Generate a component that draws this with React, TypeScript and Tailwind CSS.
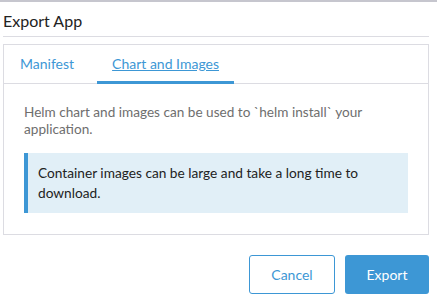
export default function App() {
  return (
    <div className="w-[437px] h-[296px] bg-white border-t-2 border-[#c6c6ce] font-['Lato',sans-serif] overflow-hidden">
      <div className="px-[3px]">
        <h2 className="h-[34px] pt-[8px] text-[16px] leading-[22px] text-[#222]">Export App</h2>
        <div className="mr-[5px] border-t border-[#dcdce2]" />
        <div className="mt-[7px] mr-[5px] h-[191px] border border-[#dcdce2]">
          <div className="flex h-[39px] border-b border-[#dcdce2]">
            <button className="ml-[1px] px-[15px] pb-[2px] flex items-center text-[14px] text-[#3d97d5]">Manifest</button>
            <button className="ml-[8px] px-[15px] flex items-center text-[14px] text-[#3d97d5] underline border-b-[3px] border-[#3d97d5] -mb-[1px]">
              Chart and Images
            </button>
          </div>
          <div className="px-[20px] pt-[20px]">
            <p className="text-[13.6px] leading-[17px] text-[#6e6e6e]">
              Helm chart and images can be used to `helm install` your application.
            </p>
            <div className="mt-[15px] border-l-4 border-[#3d97d5] bg-[#e1eff7] px-[10px] py-[10px] text-[13.7px] leading-[20px] text-[#222]">
              Container images can be large and take a long time to download.
            </div>
          </div>
        </div>
      </div>
      <div className="mt-[20px] flex justify-end gap-[10px] pr-[8px]">
        <button className="w-[86px] h-[39px] rounded-[3px] border border-[#3d97d5] text-[14px] text-[#3d97d5]">Cancel</button>
        <button className="w-[84px] h-[39px] rounded-[3px] bg-[#3d97d5] text-[14px] text-white">Export</button>
      </div>
    </div>
  );
}
